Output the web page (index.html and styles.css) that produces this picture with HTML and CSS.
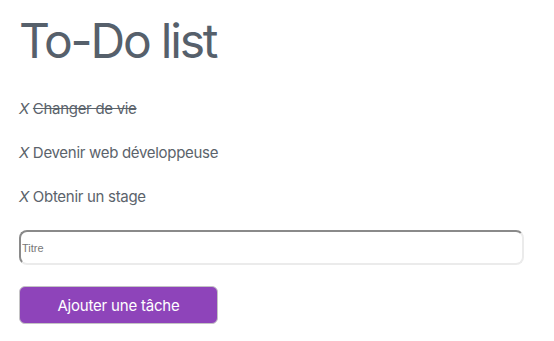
FILE: index.html
```html
<!DOCTYPE html>
<html lang="fr">
<head>
    <meta charset="UTF-8">
    <meta name="viewport" content="width=device-width, initial-scale=1.0">
    <title>To-Do list</title>
    <link rel="stylesheet" href="styles.css">
</head>
<body>
    <div class="todo-container">
        <h1>To-Do list</h1>
        <ul class="todo-list">
            <li class="todo-item done"><span class="remove">X</span> <span class="label">Changer de vie</span></li>
            <li class="todo-item"><span class="remove">X</span> <span class="label">Devenir web développeuse</span></li>
            <li class="todo-item"><span class="remove">X</span> <span class="label">Obtenir un stage</span></li>
        </ul>
        <form class="todo-form">
            <input type="text" name="titre" placeholder="Titre">
            <button type="submit">Ajouter une tâche</button>
        </form>
    </div>
</body>
</html>
```

FILE: styles.css
```css
* {
    margin: 0;
    padding: 0;
    box-sizing: border-box;
}

body {
    font-family: Inter, 'Noto Sans', sans-serif;
    background: #fff;
    color: #5b636b;
}

.todo-container {
    padding: 13px 19px;
}

h1 {
    font-size: 48px;
    font-weight: 400;
    line-height: 56px;
    letter-spacing: -2.2px;
    color: #56606b;
    margin-bottom: 28px;
}

.todo-list {
    list-style: none;
}

.todo-item {
    font-size: 15px;
    line-height: 24px;
    letter-spacing: -0.3px;
    margin-bottom: 20px;
    color: #5b636b;
}

.remove {
    font-style: italic;
}

.done .label {
    text-decoration: line-through;
}

.todo-form {
    display: flex;
    flex-direction: column;
    align-items: flex-start;
    gap: 21px;
    padding-top: 1px;
}

input {
    width: 505px;
    height: 35px;
    border: 2px solid #ebebeb;
    border-top-color: #8a8a8a;
    border-left-color: #8a8a8a;
    border-radius: 8px;
    padding: 0 1px;
    font-size: 11px;
    font-family: 'Liberation Sans', sans-serif;
    outline: none;
}

input::placeholder {
    color: #777;
}

button {
    width: 199px;
    height: 38px;
    background: #8e44ba;
    color: #fff;
    border: 1px solid #c4c4c4;
    border-radius: 6px;
    font-family: Inter, 'Noto Sans', sans-serif;
    font-size: 15px;
    letter-spacing: -0.2px;
    cursor: pointer;
}
```
